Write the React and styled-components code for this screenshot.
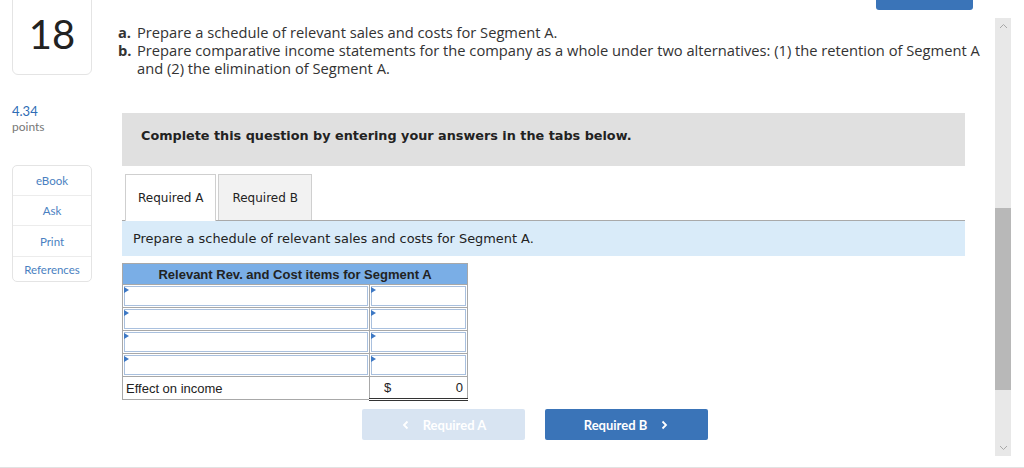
import React from "react";
import styled, { createGlobalStyle } from "styled-components";

const GlobalStyle = createGlobalStyle`
  html, body {
    margin: 0;
    padding: 0;
    background: #fff;
  }
  body {
    font-family: "Lato", "Liberation Sans", sans-serif;
    color: #333;
  }
`;

const Page = styled.div`
  position: relative;
  width: 1024px;
  height: 468px;
  overflow: hidden;
  display: flex;
  border-bottom: 1px solid #e2e2e2;
  box-sizing: border-box;
`;

const Side = styled.aside`
  width: 118px;
  flex-shrink: 0;
  padding-left: 12px;
  box-sizing: border-box;
  display: flex;
  flex-direction: column;
`;

const NumberBox = styled.div`
  width: 80px;
  height: 81px;
  margin-top: -6px;
  border: 1px solid #e4e4e4;
  border-radius: 6px;
  box-sizing: border-box;
  display: flex;
  align-items: center;
  justify-content: center;
  padding-bottom: 2px;
  font-size: 40px;
  color: #222;
  font-family: "Lato", sans-serif;
`;

const Points = styled.div`
  margin-top: 28px;
  font-size: 13px;
  line-height: 16px;
  color: #2f6db5;
`;

const PointsLabel = styled.div`
  font-size: 12px;
  line-height: 16px;
  color: #777;
`;

const Menu = styled.ul`
  list-style: none;
  margin: 30px 0 0;
  padding: 0;
  width: 80px;
  border: 1px solid #e4e4e4;
  border-radius: 5px;
  box-sizing: border-box;
`;

const MenuItem = styled.li`
  height: ${(p) => p.h}px;
  display: flex;
  align-items: center;
  justify-content: center;
  font-size: 11.5px;
  color: #4a7fc1;
  border-top: ${(p) => (p.first ? "none" : "1px solid #ececec")};
  box-sizing: border-box;
`;

const Main = styled.main`
  width: 877px;
  flex-shrink: 0;
  display: flex;
  flex-direction: column;
  align-items: flex-start;
`;

const Question = styled.ol`
  list-style: none;
  margin: 0;
  padding: 23px 0 0;
  font-family: "Open Sans", "Lato", sans-serif;
  font-size: 14.7px;
  line-height: 18px;
  color: #333;
`;

const QItem = styled.li`
  display: flex;
`;

const QLetter = styled.b`
  width: 19px;
  flex-shrink: 0;
  font-weight: 700;
`;

const Instruction = styled.div`
  margin: 36px 0 0 4px;
  width: 843px;
  height: 53px;
  background: #e0e0e0;
  display: flex;
  align-items: center;
  padding: 0 0 8px 19px;
  box-sizing: border-box;
  font-family: "DejaVu Sans", Verdana, sans-serif;
  font-weight: 700;
  font-size: 12.8px;
  color: #222;
`;

const Tabs = styled.div`
  margin: 8px 0 0 4px;
  width: 843px;
  display: flex;
  gap: 2px;
  padding-left: 3px;
  box-sizing: border-box;
  border-bottom: 1px solid #a9a9a9;
`;

const Tab = styled.div`
  padding: 0 ${(p) => (p.active ? 12 : 13)}px;
  display: flex;
  align-items: center;
  box-sizing: border-box;
  border: 1px solid #cfcfcf;
  border-bottom: none;
  background: ${(p) => (p.active ? "#fff" : "#f2f2f2")};
  margin-bottom: ${(p) => (p.active ? "-1px" : "0")};
  height: ${(p) => (p.active ? 47 : 46)}px;
  font-family: "DejaVu Sans", Verdana, sans-serif;
  font-size: 12px;
  color: #222;
`;

const Prompt = styled.div`
  margin-left: 4px;
  width: 843px;
  height: 35px;
  background: #d9ebf9;
  display: flex;
  align-items: center;
  padding-left: 11px;
  box-sizing: border-box;
  font-family: "DejaVu Sans", Verdana, sans-serif;
  font-size: 12.9px;
  color: #222;
`;

const Table = styled.table`
  margin: 7px 0 0 4px;
  border-collapse: collapse;
  font-family: "Liberation Sans", Arial, sans-serif;
  font-size: 13px;
  color: #222;
`;

const HeadCell = styled.th`
  height: 20px;
  padding: 0;
  background: #7aaee6;
  border: 1px solid #a8a8a8;
  font-weight: 700;
  font-size: 13px;
  text-align: center;
`;

const Cell = styled.td`
  width: ${(p) => p.w}px;
  height: 22px;
  padding: 0;
  border: 1px solid #a8a8a8;
  box-sizing: border-box;
`;

const InputBox = styled.div`
  position: relative;
  height: 18px;
  margin: 1px;
  border: 1px solid #a9c0de;
  background: #fff;

  &::before {
    content: "";
    position: absolute;
    left: -1px;
    top: 0;
    border-style: solid;
    border-width: 3px 0 3px 5px;
    border-color: transparent transparent transparent #3d78c4;
  }
`;

const LabelCell = styled.td`
  height: 21px;
  padding: 0 3px;
  border: 1px solid #a8a8a8;
  font-size: 13px;
`;

const TotalCell = styled.td`
  height: 21px;
  padding: 0 4px 0 14px;
  border: 1px solid #a8a8a8;
  border-bottom: 3px double #333;
  font-size: 13px;
`;

const TotalInner = styled.div`
  display: flex;
  justify-content: space-between;
`;

const Nav = styled.div`
  margin: 8px 0 0 244px;
  display: flex;
  gap: 20px;
`;

const NavButton = styled.button`
  width: 163px;
  height: 31px;
  border: none;
  border-radius: 2px;
  background: ${(p) => (p.disabled ? "#d8e4f2" : "#3a74b8")};
  color: #fff;
  font-family: "Lato", sans-serif;
  font-weight: 700;
  font-size: 13px;
  display: flex;
  align-items: center;
  justify-content: center;
  gap: 12px;
  padding: 0;
  cursor: pointer;
`;

const Scrollbar = styled.div`
  margin-top: 18px;
  width: 16px;
  height: 438px;
  background: #e8e8e8;
  display: flex;
  flex-direction: column;
  align-items: center;
`;

const ScrollArrow = styled.div`
  height: ${(p) => p.h}px;
  display: flex;
  align-items: center;
  justify-content: center;
`;

const Thumb = styled.div`
  width: 16px;
  height: 182px;
  background: #b8b8b8;
`;

const ScrollGap = styled.div`
  flex: ${(p) => (p.size ? `0 0 ${p.size}px` : 1)};
`;

const TopButton = styled.div`
  position: absolute;
  left: 876px;
  top: 0;
  width: 97px;
  height: 10px;
  background: #3a74b8;
  border-radius: 0 0 3px 3px;
`;

const Chevron = ({ dir, color = "#fff", size = 10 }) => (
  <svg width={size} height={size} viewBox="0 0 10 10">
    <path
      d={dir === "left" ? "M6.5 1.5 L3 5 L6.5 8.5" : "M3.5 1.5 L7 5 L3.5 8.5"}
      fill="none"
      stroke={color}
      strokeWidth="1.8"
    />
  </svg>
);

const SmallChevron = ({ up }) => (
  <svg width="9" height="6" viewBox="0 0 9 6">
    <path
      d={up ? "M1 5 L4.5 1.5 L8 5" : "M1 1 L4.5 4.5 L8 1"}
      fill="none"
      stroke="#a8a8a8"
      strokeWidth="1"
    />
  </svg>
);

const rows = [0, 1, 2, 3];

export default function App() {
  return (
    <>
      <GlobalStyle />
      <Page>
        <TopButton />
        <Side>
          <NumberBox>18</NumberBox>
          <Points>4.34</Points>
          <PointsLabel>points</PointsLabel>
          <Menu>
            <MenuItem first h={29}>eBook</MenuItem>
            <MenuItem h={30}>Ask</MenuItem>
            <MenuItem h={31}>Print</MenuItem>
            <MenuItem h={25}>References</MenuItem>
          </Menu>
        </Side>
        <Main>
          <Question>
            <QItem>
              <QLetter>a.</QLetter>
              <span>Prepare a schedule of relevant sales and costs for Segment A.</span>
            </QItem>
            <QItem>
              <QLetter>b.</QLetter>
              <span>
                Prepare comparative income statements for the company as a whole under two
                alternatives: (1) the retention of Segment A
                <br />
                and (2) the elimination of Segment A.
              </span>
            </QItem>
          </Question>
          <Instruction>Complete this question by entering your answers in the tabs below.</Instruction>
          <Tabs>
            <Tab active>Required A</Tab>
            <Tab>Required B</Tab>
          </Tabs>
          <Prompt>Prepare a schedule of relevant sales and costs for Segment A.</Prompt>
          <Table>
            <thead>
              <tr>
                <HeadCell colSpan={2}>Relevant Rev. and Cost items for Segment A</HeadCell>
              </tr>
            </thead>
            <tbody>
              {rows.map((r) => (
                <tr key={r}>
                  <Cell w={247}>
                    <InputBox />
                  </Cell>
                  <Cell w={98}>
                    <InputBox />
                  </Cell>
                </tr>
              ))}
              <tr>
                <LabelCell>Effect on income</LabelCell>
                <TotalCell>
                  <TotalInner>
                    <span>$</span>
                    <span>0</span>
                  </TotalInner>
                </TotalCell>
              </tr>
            </tbody>
          </Table>
          <Nav>
            <NavButton disabled>
              <Chevron dir="left" />
              Required A
            </NavButton>
            <NavButton>
              Required B
              <Chevron dir="right" />
            </NavButton>
          </Nav>
        </Main>
        <Scrollbar>
          <ScrollArrow h={16}>
            <SmallChevron up />
          </ScrollArrow>
          <ScrollGap size={174} />
          <Thumb />
          <ScrollGap />
          <ScrollArrow h={16}>
            <SmallChevron />
          </ScrollArrow>
        </Scrollbar>
      </Page>
    </>
  );
}
